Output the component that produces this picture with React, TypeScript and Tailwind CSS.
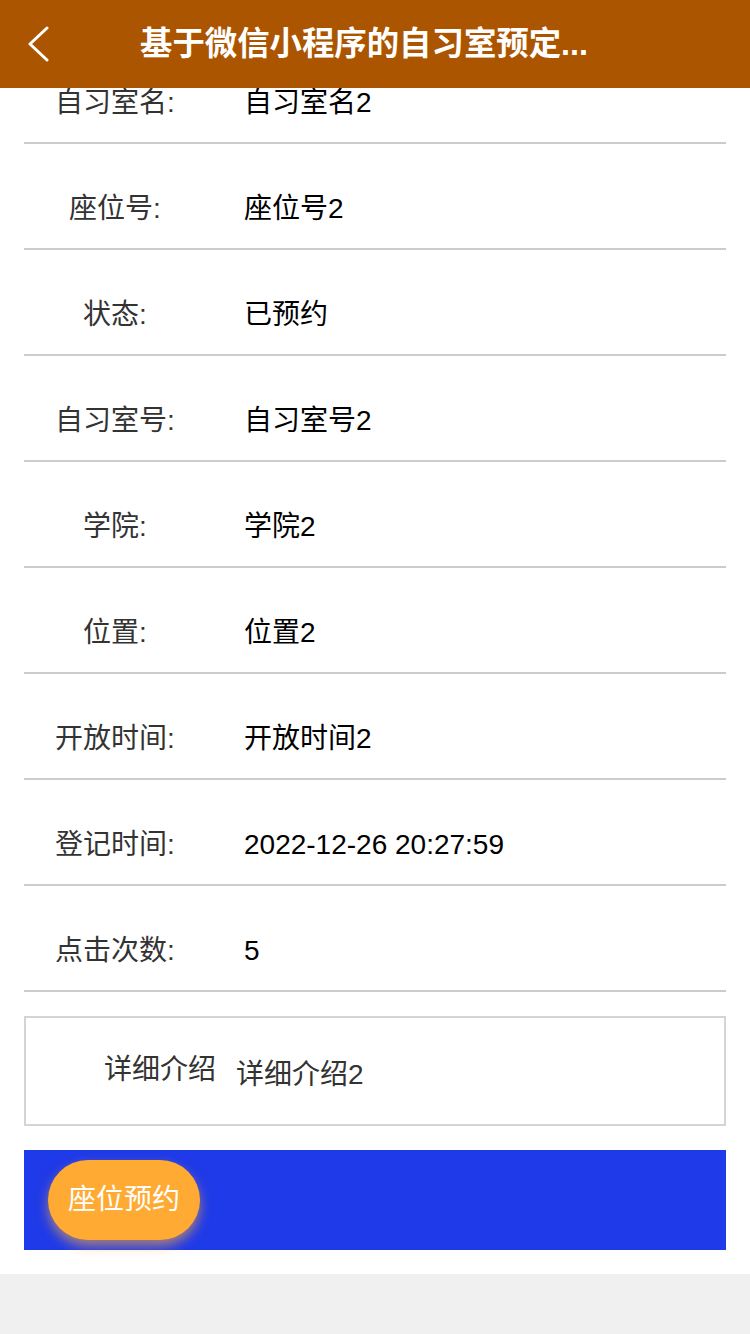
const rows = [
  { label: '自习室名:', value: '自习室名2' },
  { label: '座位号:', value: '座位号2' },
  { label: '状态:', value: '已预约' },
  { label: '自习室号:', value: '自习室号2' },
  { label: '学院:', value: '学院2' },
  { label: '位置:', value: '位置2' },
  { label: '开放时间:', value: '开放时间2' },
  { label: '登记时间:', value: '2022-12-26 20:27:59' },
  { label: '点击次数:', value: '5' },
];

const font = { fontFamily: '"Liberation Sans", "Noto Sans CJK SC", sans-serif' };

export default function App() {
  return (
    <div className="relative min-h-[1334px] w-[750px] bg-[#f0f0f0]" style={font}>
      {/* Header overlays the scrolled content */}
      <div className="absolute top-0 left-0 z-10 flex h-[88px] w-full items-center bg-[#ab5500]">
        <svg className="ml-[26px] h-[36px] w-[24px]" viewBox="0 0 24 36" fill="none">
          <polyline points="21,2 4,18 21,34" stroke="white" strokeWidth="3" strokeLinecap="round" strokeLinejoin="round" />
        </svg>
        <h1 className="ml-[90px] text-[32.4px] font-bold leading-none text-white">基于微信小程序的自习室预定...</h1>
      </div>

      <div className="bg-white px-6 pt-[38px] pb-6">
        {/* Detail rows */}
        {rows.map((row) => (
          <div key={row.label} className="flex h-[106px] items-start border-b-2 border-[#cccccc] pt-[45px]">
            <div className="w-[182px] text-center text-[28px] leading-[40px] text-[#333333]">{row.label}</div>
            <div className="ml-[38px] text-[28px] leading-[40px] text-black">{row.value}</div>
          </div>
        ))}

        {/* Description box */}
        <div className="mt-[24px] flex h-[110px] items-start border-2 border-[#d4d4d4]">
          <div className="ml-[78px] mt-[32px] text-[28px] leading-[40px] text-[#333333]">详细介绍</div>
          <div className="ml-[20px] mt-[37px] text-[28px] leading-[40px] text-[#333333]">详细介绍2</div>
        </div>

        {/* Action bar */}
        <div className="mt-6 flex h-[100px] items-start bg-[#1f3ae8] pl-6 pt-[10px]">
          <button className="flex h-[80px] w-[152px] items-center justify-center rounded-full bg-[#ffaa33] text-[28px] text-white shadow-[0_6px_12px_rgba(255,170,51,0.6)]">
            座位预约
          </button>
        </div>
      </div>
    </div>
  );
}
